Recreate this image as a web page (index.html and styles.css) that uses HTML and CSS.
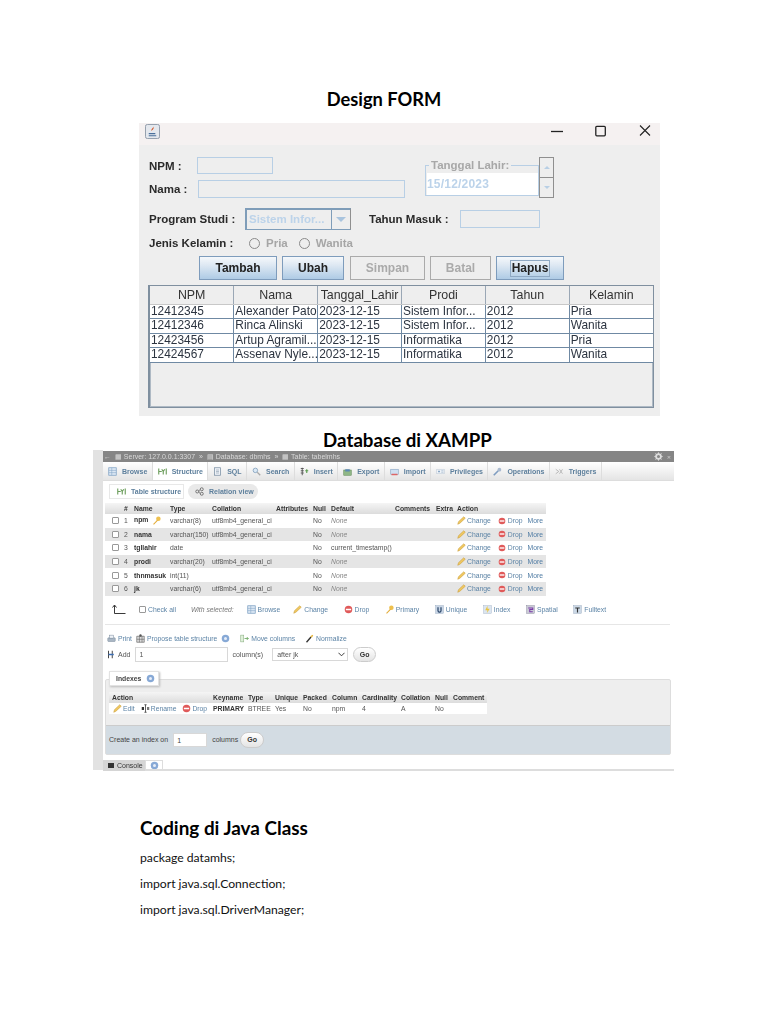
FILE: index.html
```html
<!DOCTYPE html>
<html lang="id">
<head>
<meta charset="utf-8">
<title>Design FORM</title>
<link rel="stylesheet" href="styles.css">
</head>
<body>
<svg class="defs" width="0" height="0" aria-hidden="true">
  <symbol id="pencil" viewBox="0 0 12 12"><path d="M1 11l1-3.5L9 1l2 2-7 6.5z" fill="#f0c860" stroke="#c79a35" stroke-width=".7"/></symbol>
  <symbol id="drop" viewBox="0 0 12 12"><circle cx="6" cy="6" r="5" fill="#e05a5a"/><rect x="2.5" y="5" width="7" height="2" fill="#fff"/></symbol>
  <symbol id="key" viewBox="0 0 12 12"><circle cx="8.5" cy="3.5" r="3" fill="#eec04e"/><path d="M7 5L1.5 10.5l1 1L8 6z" fill="#e3ad3a"/></symbol>
  <symbol id="grid" viewBox="0 0 12 12"><rect x="1" y="1" width="10" height="10" fill="#dce8f4" stroke="#7fa2c4"/><path d="M1 4.5h10M1 7.5h10M5 1v10" stroke="#7fa2c4" stroke-width=".7"/></symbol>
  <symbol id="struct" viewBox="0 0 12 12"><path d="M1 2v8M1 6h4M5 3l2 3 2-3M7 6v4M11 2v8" stroke="#6c9e5c" stroke-width="1.5" fill="none"/></symbol>
  <symbol id="sql" viewBox="0 0 12 12"><rect x="2" y="1" width="8" height="10" fill="#eef2f7" stroke="#7a8ea3"/><path d="M4 4h4M4 6h4M4 8h4" stroke="#7a8ea3" stroke-width=".7"/></symbol>
  <symbol id="search" viewBox="0 0 12 12"><circle cx="4.5" cy="4.5" r="3" fill="#dbe9f5" stroke="#7a9ab8"/><path d="M7 7l4 4" stroke="#a9a9a9" stroke-width="1.6"/></symbol>
  <symbol id="insert" viewBox="0 0 12 12"><path d="M1 2h4M1 5h4M1 8h4M3 1v10" stroke="#555" stroke-width="1.2"/><path d="M7 5h4M9 3v5" stroke="#5a9c4e" stroke-width="1.5"/></symbol>
  <symbol id="export" viewBox="0 0 12 12"><rect x="1" y="4" width="10" height="7" fill="#8fb786" stroke="#5b8750" stroke-width=".7"/><path d="M3 3h6v3H3z" fill="#5b87b5"/></symbol>
  <symbol id="import" viewBox="0 0 12 12"><rect x="1" y="3" width="10" height="7" fill="#cfe0f2" stroke="#7b9abb" stroke-width=".7"/><path d="M2 9h8v2H2z" fill="#d66"/></symbol>
  <symbol id="priv" viewBox="0 0 12 12"><rect x="1" y="3" width="10" height="6" fill="#eef2f7" stroke="#bcc8d4" stroke-width=".7"/><path d="M3 5h2v2H3z" fill="#6a8fb5"/><path d="M7 5h3M7 7h3" stroke="#8ba5bf" stroke-width=".7"/></symbol>
  <symbol id="wrench" viewBox="0 0 12 12"><path d="M1 11L7 5" stroke="#7e9cc0" stroke-width="2.2"/><circle cx="8.5" cy="3.5" r="2.5" fill="#a9bad0"/></symbol>
  <symbol id="trig" viewBox="0 0 12 12"><path d="M1 3l4 3-4 3M6 3l4 6M10 3L6 9" stroke="#aaa" fill="none"/></symbol>
  <symbol id="relation" viewBox="0 0 12 12"><circle cx="3" cy="6" r="2" fill="none" stroke="#555"/><circle cx="9" cy="3" r="2" fill="none" stroke="#555"/><circle cx="9" cy="9" r="2" fill="none" stroke="#555"/><path d="M5 6l2-3M5 6l2 3" stroke="#555" stroke-width=".7"/></symbol>
  <symbol id="help" viewBox="0 0 12 12"><circle cx="6" cy="6" r="5" fill="#87a9d6"/><circle cx="6" cy="6" r="2" fill="#e7eef8"/></symbol>
  <symbol id="print" viewBox="0 0 12 12"><rect x="1" y="5" width="10" height="5" rx="1" fill="#a9b6c4" stroke="#6d7f92" stroke-width=".6"/><rect x="3" y="1.5" width="6" height="4" fill="#eef2f7" stroke="#6d7f92" stroke-width=".6"/></symbol>
  <symbol id="propose" viewBox="0 0 12 12"><path d="M1 3h10v8H1z" fill="#ddd" stroke="#555" stroke-width=".8"/><path d="M1 7h10M4.5 3v8M8 3v8" stroke="#555" stroke-width=".7"/><circle cx="6" cy="2" r="1.6" fill="#555"/></symbol>
  <symbol id="move" viewBox="0 0 12 12"><rect x="1" y="1.5" width="4" height="9" fill="#dff0da" stroke="#86ad7e" stroke-width=".7"/><path d="M6 6h5M9 4l2 2-2 2" stroke="#5a9c4e" fill="none"/></symbol>
  <symbol id="normal" viewBox="0 0 12 12"><path d="M2 11L8 4" stroke="#333" stroke-width="1.8"/><path d="M7 3l2 2 2-3-1-1z" fill="#e8b83e"/></symbol>
  <symbol id="addcol" viewBox="0 0 12 12"><path d="M2 1v10M7 1v10" stroke="#333" stroke-width="1.2"/><path d="M2 6h7" stroke="#3d6fb5" stroke-width="2"/></symbol>
  <symbol id="rename" viewBox="0 0 12 12"><rect x="1" y="4" width="3" height="4" fill="#333"/><path d="M6 1v10M4.5 1h3M4.5 11h3" stroke="#333"/><rect x="8" y="4" width="3" height="4" fill="#777"/></symbol>
  <symbol id="unique" viewBox="0 0 12 12"><rect x="1" y="1" width="10" height="10" fill="#c9d6e6" stroke="#8fa4bd" stroke-width=".6"/><path d="M4 3v4.5a2 2 0 0 0 4 0V3" stroke="#1e3a5f" stroke-width="1.5" fill="none"/></symbol>
  <symbol id="index" viewBox="0 0 12 12"><rect x="1" y="1" width="10" height="10" fill="#dbe5f0" stroke="#9db0c6" stroke-width=".6"/><path d="M6 1L3 7h3l-1 4 4-6H6z" fill="#e9c33f"/></symbol>
  <symbol id="spatial" viewBox="0 0 12 12"><rect x="1" y="1" width="10" height="10" fill="#c9c9d6" stroke="#7f7f94" stroke-width=".6"/><path d="M3 4h6v2H5v3h4" stroke="#7a3aa8" stroke-width="1.4" fill="none"/></symbol>
  <symbol id="fulltext" viewBox="0 0 12 12"><rect x="1" y="1" width="10" height="10" fill="#cbd8e6" stroke="#90a4ba" stroke-width=".6"/><path d="M3 4h6M6 4v6" stroke="#333" stroke-width="1.5"/></symbol>
  <symbol id="gear" viewBox="0 0 12 12"><circle cx="6" cy="6" r="3.2" fill="none" stroke="#ddd" stroke-width="2.4"/><path d="M6 .5v2M6 9.500v2M.5 6h2M9.500 6h2M2 2l1.500 1.500M8.500 8.500L10 10M10 2L8.500 3.500M3.500 8.500L2 10" stroke="#ddd" stroke-width="1.3"/></symbol>
</svg>

<main class="page">
  <h2 class="doc-title">Design FORM</h2>

  <section class="win">
    <header class="win-bar">
      <span class="java-icon">
        <svg viewBox="0 0 16 16" width="15" height="15"><rect x=".5" y=".5" width="15" height="15" rx="2" fill="#e4e8ee" stroke="#8d99a8"/><path d="M8.500 2.500c1 2-2.500 3-1.500 5 .2-.8 3-2 2-4" fill="#d2562a"/><path d="M4 9.500h7v1.500H4zM4 12h8v1H4z" fill="#4a6f9c"/></svg>
      </span>
      <span class="win-ctrls">
        <svg viewBox="0 0 44 14" width="44" height="14" class="ctl"><path d="M0 7.500h12" stroke="#222" stroke-width="1.300"/></svg>
        <svg viewBox="0 0 44 14" width="44" height="14" class="ctl"><rect x=".8" y="2.300" width="9.500" height="9.500" rx="1" fill="none" stroke="#222" stroke-width="1.300"/></svg>
        <svg viewBox="0 0 12 14" width="12" height="14" class="ctl"><path d="M1 1.500l10 10M11 1.500l-10 10" stroke="#222" stroke-width="1.100"/></svg>
      </span>
    </header>
    <div class="win-body">
      <div class="top-block">
        <div class="id-col">
          <div class="row-npm"><label class="lbl lbl-npm">NPM :</label><span class="field field-npm"></span></div>
          <div class="row-nama"><label class="lbl lbl-nama">Nama :</label><span class="field field-nama"></span></div>
        </div>
        <div class="date-box">
          <div class="date-group">
            <span class="date-legend">Tanggal Lahir:</span>
            <span class="date-value">15/12/2023</span>
          </div>
          <div class="spinner">
            <span class="spin"><i class="tri tri-up"></i></span>
            <span class="spin"><i class="tri tri-down"></i></span>
          </div>
        </div>
      </div>
      <div class="row-prodi">
        <label class="lbl lbl-prodi">Program Studi :</label>
        <span class="combo"><span class="combo-text">Sistem Infor...</span><span class="combo-btn"><i class="tri tri-combo"></i></span></span>
        <label class="lbl lbl-tahun">Tahun Masuk :</label>
        <span class="field field-tahun"></span>
      </div>
      <div class="row-jk">
        <label class="lbl lbl-jk">Jenis Kelamin :</label>
        <span class="radio"></span><span class="radio-text">Pria</span>
        <span class="radio radio-2"></span><span class="radio-text">Wanita</span>
      </div>
      <div class="btn-row">
        <button class="jbtn on w-tambah">Tambah</button>
        <button class="jbtn on w-ubah">Ubah</button>
        <button class="jbtn off w-simpan">Simpan</button>
        <button class="jbtn off w-batal">Batal</button>
        <button class="jbtn on w-hapus"><span class="focus">Hapus</span></button>
      </div>
      <div class="jtable-wrap">
        <table class="jtable">
          <thead><tr><th>NPM</th><th>Nama</th><th>Tanggal_Lahir</th><th>Prodi</th><th>Tahun</th><th>Kelamin</th></tr></thead>
          <tbody>
            <tr><td>12412345</td><td>Alexander Pato</td><td>2023-12-15</td><td>Sistem Infor...</td><td>2012</td><td>Pria</td></tr>
            <tr><td>12412346</td><td>Rinca Alinski</td><td>2023-12-15</td><td>Sistem Infor...</td><td>2012</td><td>Wanita</td></tr>
            <tr><td>12423456</td><td>Artup Agramil...</td><td>2023-12-15</td><td>Informatika</td><td>2012</td><td>Pria</td></tr>
            <tr><td>12424567</td><td>Assenav Nyle...</td><td>2023-12-15</td><td>Informatika</td><td>2012</td><td>Wanita</td></tr>
          </tbody>
        </table>
      </div>
    </div>
  </section>

  <h2 class="doc-title title-2">Database di XAMPP</h2>

  <section class="pma">
    <div class="crumb">
      <span class="crumb-text">← &nbsp;▦ Server: 127.0.0.1:3307 &nbsp;» &nbsp;▤ Database: dbmhs &nbsp;» &nbsp;▦ Table: tabelmhs</span>
      <span class="crumb-end"><svg class="ic"><use href="#gear"/></svg><span class="crumb-x">⌅</span></span>
    </div>
    <nav class="tabs">
      <a class="tab"><svg class="ic"><use href="#grid"/></svg>Browse</a>
      <a class="tab active"><svg class="ic"><use href="#struct"/></svg>Structure</a>
      <a class="tab"><svg class="ic"><use href="#sql"/></svg>SQL</a>
      <a class="tab"><svg class="ic"><use href="#search"/></svg>Search</a>
      <a class="tab"><svg class="ic"><use href="#insert"/></svg>Insert</a>
      <a class="tab"><svg class="ic"><use href="#export"/></svg>Export</a>
      <a class="tab"><svg class="ic"><use href="#import"/></svg>Import</a>
      <a class="tab"><svg class="ic"><use href="#priv"/></svg>Privileges</a>
      <a class="tab"><svg class="ic"><use href="#wrench"/></svg>Operations</a>
      <a class="tab"><svg class="ic"><use href="#trig"/></svg>Triggers</a>
    </nav>
    <div class="subtabs">
      <a class="sub sub-a"><svg class="ic"><use href="#struct"/></svg>Table structure</a>
      <a class="sub sub-b"><svg class="ic"><use href="#relation"/></svg>Relation view</a>
    </div>
    <table class="stbl">
      <thead><tr><th></th><th>#</th><th>Name</th><th>Type</th><th>Collation</th><th>Attributes</th><th>Null</th><th>Default</th><th>Comments</th><th>Extra</th><th>Action</th></tr></thead>
      <tbody>
        <tr><td><i class="cb"></i></td><td>1</td><td class="nm">npm <svg class="ic key-ic"><use href="#key"/></svg></td><td>varchar(8)</td><td>utf8mb4_general_ci</td><td></td><td>No</td><td class="it">None</td><td></td><td></td><td><span class="acts"><svg class="ic"><use href="#pencil"/></svg><a class="chg">Change</a><svg class="ic ic-d"><use href="#drop"/></svg><a class="drp">Drop</a><a class="more">More</a></span></td></tr>
        <tr><td><i class="cb"></i></td><td>2</td><td class="nm">nama</td><td>varchar(150)</td><td>utf8mb4_general_ci</td><td></td><td>No</td><td class="it">None</td><td></td><td></td><td><span class="acts"><svg class="ic"><use href="#pencil"/></svg><a class="chg">Change</a><svg class="ic ic-d"><use href="#drop"/></svg><a class="drp">Drop</a><a class="more">More</a></span></td></tr>
        <tr><td><i class="cb"></i></td><td>3</td><td class="nm">tgllahir</td><td>date</td><td></td><td></td><td>No</td><td>current_timestamp()</td><td></td><td></td><td><span class="acts"><svg class="ic"><use href="#pencil"/></svg><a class="chg">Change</a><svg class="ic ic-d"><use href="#drop"/></svg><a class="drp">Drop</a><a class="more">More</a></span></td></tr>
        <tr><td><i class="cb"></i></td><td>4</td><td class="nm">prodi</td><td>varchar(20)</td><td>utf8mb4_general_ci</td><td></td><td>No</td><td class="it">None</td><td></td><td></td><td><span class="acts"><svg class="ic"><use href="#pencil"/></svg><a class="chg">Change</a><svg class="ic ic-d"><use href="#drop"/></svg><a class="drp">Drop</a><a class="more">More</a></span></td></tr>
        <tr><td><i class="cb"></i></td><td>5</td><td class="nm">thnmasuk</td><td>int(11)</td><td></td><td></td><td>No</td><td class="it">None</td><td></td><td></td><td><span class="acts"><svg class="ic"><use href="#pencil"/></svg><a class="chg">Change</a><svg class="ic ic-d"><use href="#drop"/></svg><a class="drp">Drop</a><a class="more">More</a></span></td></tr>
        <tr><td><i class="cb"></i></td><td>6</td><td class="nm">jk</td><td>varchar(6)</td><td>utf8mb4_general_ci</td><td></td><td>No</td><td class="it">None</td><td></td><td></td><td><span class="acts"><svg class="ic"><use href="#pencil"/></svg><a class="chg">Change</a><svg class="ic ic-d"><use href="#drop"/></svg><a class="drp">Drop</a><a class="more">More</a></span></td></tr>
      </tbody>
    </table>
    <div class="bulk">
      <svg class="arrow" viewBox="0 0 14 10" width="14" height="10"><path d="M2.500 9.500V1.500M.5 3.500l2-2.500 2 2.500M2.500 9.500h11" fill="none" stroke="#222" stroke-width=".9"/></svg>
      <i class="cb cb-all"></i><a class="lnk check-all">Check all</a>
      <em class="with">With selected:</em>
      <a class="lnk b-item b-first"><svg class="ic"><use href="#grid"/></svg>Browse</a>
      <a class="lnk b-item b-first"><svg class="ic"><use href="#pencil"/></svg>Change</a>
      <a class="lnk b-item"><svg class="ic"><use href="#drop"/></svg>Drop</a>
      <a class="lnk b-item"><svg class="ic"><use href="#key"/></svg>Primary</a>
      <a class="lnk b-item"><svg class="ic"><use href="#unique"/></svg>Unique</a>
      <a class="lnk b-item"><svg class="ic"><use href="#index"/></svg>Index</a>
      <a class="lnk b-item"><svg class="ic"><use href="#spatial"/></svg>Spatial</a>
      <a class="lnk b-item"><svg class="ic"><use href="#fulltext"/></svg>Fulltext</a>
    </div>
    <hr class="rule">
    <div class="tools">
      <a class="lnk t-item"><svg class="ic"><use href="#print"/></svg>Print</a>
      <a class="lnk t-item t-prop"><svg class="ic"><use href="#propose"/></svg>Propose table structure</a>
      <svg class="ic ic-help"><use href="#help"/></svg>
      <a class="lnk t-item t-move"><svg class="ic"><use href="#move"/></svg>Move columns</a>
      <a class="lnk t-item t-norm"><svg class="ic"><use href="#normal"/></svg>Normalize</a>
    </div>
    <div class="addrow">
      <svg class="ic"><use href="#addcol"/></svg>
      <span class="add-l">Add</span>
      <span class="inp inp-add">1</span>
      <span class="add-c">column(s)</span>
      <span class="sel">after jk<svg class="sel-caret" viewBox="0 0 8 5" width="7" height="5"><path d="M.5.5L4 4 7.500.5" fill="none" stroke="#222"/></svg></span>
      <span class="go go-add">Go</span>
    </div>
    <section class="idx">
      <div class="idx-legend">Indexes<svg class="ic"><use href="#help"/></svg></div>
      <table class="itbl">
        <thead><tr><th>Action</th><th>Keyname</th><th>Type</th><th>Unique</th><th>Packed</th><th>Column</th><th>Cardinality</th><th>Collation</th><th>Null</th><th>Comment</th></tr></thead>
        <tbody><tr>
          <td><span class="acts act-idx"><svg class="ic"><use href="#pencil"/></svg><a class="chg">Edit</a><svg class="ic ic-r"><use href="#rename"/></svg><a class="chg">Rename</a><svg class="ic ic-r"><use href="#drop"/></svg><a class="chg">Drop</a></span></td>
          <td class="nm">PRIMARY</td><td>BTREE</td><td>Yes</td><td>No</td><td>npm</td><td>4</td><td>A</td><td>No</td><td></td>
        </tr></tbody>
      </table>
      <div class="idx-foot">
        <span>Create an index on</span>
        <span class="inp inp-idx">1</span>
        <span>columns</span>
        <span class="go go-idx">Go</span>
      </div>
    </section>
    <div class="console">
      <span class="console-tab"><i class="console-mark"></i>Console</span>
      <span class="console-help"><svg class="ic"><use href="#help"/></svg></span>
    </div>
  </section>

  <h2 class="doc-title title-3">Coding di Java Class</h2>
  <p class="code">package datamhs;</p>
  <p class="code">import java.sql.Connection;</p>
  <p class="code">import java.sql.DriverManager;</p>
</main>
</body>
</html>
```
FILE: styles.css
```css
* { box-sizing: border-box; }
html, body { margin: 0; padding: 0; background: #fff; }
.defs { position: absolute; }
.page { width: 768px; height: 1024px; overflow: hidden; padding-top: 89px; font-family: "Liberation Sans", Arial, sans-serif; }

.doc-title { margin: 0; height: 20px; font: 700 18.3px/20px Lato, sans-serif; color: #000; text-align: center; }
.title-2 { margin-top: 14px; padding-left: 47px; font-size: 18.7px; }
.title-3 { margin: 48px 0 0 140px; text-align: left; font-size: 18.9px; }
.code { margin: 10px 0 0 140px; font: 400 12.2px/16px Lato, sans-serif; color: #111; }
.title-3 + .code { margin-top: 12px; }

/* java window */
.win { width: 521px; height: 293px; margin: 14px 0 0 139px; background: #eee; filter: blur(.35px); }
.win-bar { height: 22px; background: #f5f1f1; display: flex; align-items: flex-start; justify-content: space-between; padding: 1px 9px 0 6px; }
.java-icon { display: flex; }
.win-ctrls { display: flex; }
.win-body { padding: 12px 0 0 10px; }
.lbl { font-size: 11.5px; font-weight: 700; color: #2a2a2a; white-space: nowrap; }
.field { display: block; background: #eee; border: 1px solid #b8cfe5; }
.top-block { display: flex; height: 40px; }
.id-col { width: 266px; }
.row-npm, .row-nama { display: flex; align-items: center; }
.lbl-npm { width: 48px; }
.lbl-nama { width: 49px; }
.field-npm { width: 76px; height: 17px; }
.row-nama { margin-top: 6px; }
.field-nama { width: 207px; height: 18px; }
.date-box { display: flex; margin-left: 10px; }
.date-group { position: relative; width: 114px; height: 31px; margin-top: 8px; border: 1px solid #b8cfe5; background: #eee; }
.date-legend { position: absolute; left: 3px; top: -7px; padding: 0 2px; font-size: 11.5px; font-weight: 700; color: #a8a8a8; background: #eee; line-height: 13px; white-space: nowrap; }
.date-value { position: absolute; left: 1px; right: 0; top: 7px; bottom: 0; background: #fff; font-size: 12px; font-weight: 700; color: #bcd3ea; line-height: 22px; letter-spacing: .2px; }
.spinner { display: flex; flex-direction: column; width: 15px; height: 41px; }
.spin { display: flex; align-items: center; justify-content: center; flex: 1; border: 1px solid #8f8f8f; background: #eee; }
.spin + .spin { border-top-width: 0; }
.tri { display: block; width: 0; height: 0; border-left: 3.500px solid transparent; border-right: 3.500px solid transparent; }
.tri-up { border-bottom: 3px solid #b8cfe5; }
.tri-down { border-top: 3px solid #b8cfe5; }
.tri-combo { border-left-width: 5px; border-right-width: 5px; border-top: 5px solid #a9c4de; }

.row-prodi { display: flex; align-items: center; height: 22px; margin-top: 11px; }
.lbl-prodi { width: 96px; }
.combo { display: flex; width: 106px; height: 22px; border: 1px solid #7f9db9; border-right-color: #8f8f8f; background: #eee; border-left-width: 2px; border-top-width: 2px; }
.combo-text { flex: 1; font-size: 11.5px; font-weight: 700; color: #bcd3ea; line-height: 18px; padding-left: 2px; white-space: nowrap; overflow: hidden; }
.combo-btn { width: 19px; display: flex; align-items: center; justify-content: center; border-left: 1px solid #7f9db9; }
.lbl-tahun { margin-left: 18px; width: 91px; }
.field-tahun { width: 80px; height: 18px; }
.row-jk { display: flex; align-items: center; height: 14px; margin-top: 6px; }
.lbl-jk { width: 100px; }
.radio { width: 11px; height: 11px; border: 1px solid #8a8a8a; border-radius: 50%; background: #eee; }
.radio-text { margin-left: 6px; font-size: 11.5px; font-weight: 700; color: #a6a6a6; white-space: nowrap; }
.radio-2 { margin-left: 11px; }
.btn-row { display: flex; gap: 5px; margin: 6px 0 0 50px; }
.jbtn { height: 24px; padding: 0; font: 700 12px "Liberation Sans", sans-serif; }
.jbtn.on { color: #222; border: 1px solid #7e9cbc; background: linear-gradient(#f5f8fb, #dfe9f3 35%, #aecbe5); }
.jbtn.off { color: #aaa; border: 1px solid #aaa; background: #eee; }
.w-tambah { width: 78px; }
.w-ubah { width: 62px; }
.w-simpan { width: 75px; margin-left: 1px; }
.w-batal { width: 61px; }
.w-hapus { width: 68px; }
.focus { display: inline-block; padding: 0 1px; border: 1px solid #8fa9c4; line-height: 15px; }
.jtable-wrap { width: 506px; height: 123px; margin: 5px 0 0 -1px; border: 2px solid #7f8f9f; border-width: 1px 1px 1px 2px; background: #eee; box-shadow: inset 0 0 0 1px #aeb9c4; }
.jtable { width: 100%; table-layout: fixed; border-collapse: collapse; font-size: 11.9px; color: #2c3440; }
.jtable th { height: 18px; padding: 0; font-size: 12.4px; font-weight: 400; background: #eee; border-right: 1px solid #9aa7b5; border-bottom: 1px solid #c8c8c8; color: #333; white-space: nowrap; overflow: hidden; }
.jtable td { height: 14.500px; padding: 0 0 0 1px; background: #fff; border: 1px solid #6f89a3; border-width: 0 1px 1px 0; line-height: 13px; white-space: nowrap; overflow: hidden; }
.jtable th:last-child, .jtable td:last-child { border-right: 0; }

/* phpMyAdmin */
.pma { width: 581px; height: 320px; margin-left: 93px; padding-top: 1px; border-left: 10px solid #e2e2e2; font-size: 6.800px; color: #555; filter: blur(.4px); }
.ic { width: 9px; height: 9px; flex: none; }
.crumb { display: flex; justify-content: space-between; align-items: center; height: 11px; background: #858585; color: #d9d9d9; padding: 0 2px 0 1px; font-size: 7px; white-space: nowrap; }
.crumb-end { display: flex; gap: 3px; align-items: center; }
.crumb-x { color: #ccc; }
.tabs { display: flex; height: 19px; background: linear-gradient(#fff, #e4e4e4); border-bottom: 1px solid #ddd; }
.tab { display: flex; align-items: center; gap: 5px; padding: 0 4.400px 0 5px; border-right: 1px solid #ddd; font-weight: 700; font-size: 7px; color: #5d7f9c; white-space: nowrap; }
.tab.active { background: #fff; }
.subtabs { display: flex; gap: 4px; height: 15px; margin: 3px 0 0 6px; }
.sub { display: flex; align-items: center; gap: 5px; font-weight: 700; font-size: 7px; color: #5d7f9c; white-space: nowrap; }
.sub-a { width: 75px; padding-left: 7px; background: #fff; border: 1px solid #e8e8e8; }
.sub-b { width: 70px; padding-left: 7px; background: #e9e9e9; border-radius: 8px; }
.stbl { width: 441px; margin: 4px 0 0 2px; table-layout: fixed; border-collapse: collapse; }
.stbl th { height: 11px; padding: 0 0 0 2px; text-align: left; font-size: 6.800px; color: #333; background: linear-gradient(#f5f5f5, #dcdcdc); white-space: nowrap; overflow: hidden; }
.stbl td { height: 13.600px; padding: 0 0 0 2px; white-space: nowrap; overflow: hidden; }
.stbl tbody tr:nth-child(even) { background: #e5e5e5; }
.stbl th:nth-child(1) { width: 17px; }
.stbl th:nth-child(2) { width: 10px; }
.stbl th:nth-child(3) { width: 36px; }
.stbl th:nth-child(4) { width: 42px; }
.stbl th:nth-child(5) { width: 64px; }
.stbl th:nth-child(6) { width: 37px; }
.stbl th:nth-child(7) { width: 18px; }
.stbl th:nth-child(8) { width: 64px; }
.stbl th:nth-child(9) { width: 41px; }
.stbl th:nth-child(10) { width: 21px; }
.nm { font-weight: 700; color: #333; }
.it { font-style: italic; color: #888; }
.cb { display: block; width: 7px; height: 7px; margin-left: 5px; border: 1px solid #999; border-radius: 1px; background: #fff; }
.key-ic { vertical-align: middle; margin-left: 2px; }
.acts { display: flex; align-items: center; }
.chg { margin-left: 1px; color: #5d84a6; }
.ic-d { margin-left: 7px; width: 8px; height: 8px; }
.drp { margin-left: 2px; color: #5d84a6; }
.more { margin-left: 5px; color: #4f7ba3; }
.bulk { display: flex; align-items: center; height: 13px; margin: 7px 0 0 9px; }
.arrow { flex: none; }
.cb-all { margin-left: 13px; }
.lnk { display: flex; align-items: center; color: #5d84a6; white-space: nowrap; }
.check-all { margin-left: 2px; }
.with { margin: 0 0 0 15px; color: #777; }
.b-item { gap: 2px; margin-left: 15.500px; }
.b-first { margin-left: 13px; }
.rule { height: 1px; margin: 8px 0 0 2px; width: 565px; border: 0; background: #e6e6e6; }
.tools { display: flex; align-items: center; height: 12px; margin: 8px 0 0 4px; }
.t-item { gap: 2px; }
.t-prop { margin-left: 4px; }
.ic-help { margin-left: 4px; }
.t-move { margin-left: 10px; }
.t-norm { margin-left: 10px; }
.addrow { display: flex; align-items: center; height: 15px; margin: 2px 0 0 4px; font-size: 7px; }
.add-l { margin-left: 2px; }
.inp { display: block; background: #fff; border: 1px solid #d8d8d8; line-height: 13px; padding-left: 3px; }
.inp-add { width: 93px; height: 15px; margin-left: 5px; }
.add-c { margin-left: 4px; }
.sel { display: flex; align-items: center; justify-content: space-between; width: 76px; height: 13px; margin-left: 9px; padding: 0 2px 0 4px; background: #fff; border: 1px solid #d8d8d8; }
.go { display: flex; align-items: center; justify-content: center; border-radius: 8px; border: 1px solid #ccc; background: linear-gradient(#fff, #e4e4e4); color: #333; font-weight: 700; }
.go-add { width: 23px; height: 15px; margin-left: 5px; }
.idx { position: relative; width: 566px; height: 76px; margin: 17px 0 0 2px; padding: 12px 0 0 3px; background: #eee; border: 1px solid #ddd; border-radius: 2px; }
.idx-legend { position: absolute; left: 3px; top: -9px; display: flex; align-items: center; gap: 5px; width: 50px; height: 15px; padding-left: 6px; background: #fff; border: 1px solid #e2e2e2; box-shadow: 1px 1px 2px #bbb; font-weight: 700; color: #444; }
.itbl { width: 378px; table-layout: fixed; border-collapse: collapse; }
.itbl th { height: 11px; padding: 0 0 0 1px; text-align: left; font-size: 6.800px; color: #333; background: linear-gradient(#f5f5f5, #dcdcdc); white-space: nowrap; overflow: hidden; }
.itbl td { height: 11px; padding: 0 0 0 1px; background: #fff; white-space: nowrap; overflow: hidden; }
.itbl th:nth-child(1) { width: 103px; padding-left: 3px; }
.itbl th:nth-child(2) { width: 35px; }
.itbl th:nth-child(3) { width: 27px; }
.itbl th:nth-child(4) { width: 28px; }
.itbl th:nth-child(5) { width: 29px; }
.itbl th:nth-child(6) { width: 30px; }
.itbl th:nth-child(7) { width: 39px; }
.itbl th:nth-child(8) { width: 34px; }
.itbl th:nth-child(9) { width: 18px; }
.act-idx { padding-left: 3px; }
.ic-r { margin-left: 6px; }
.idx-foot { position: absolute; left: 0; right: 0; bottom: 0; height: 29px; display: flex; align-items: center; padding-left: 3px; background: #d3dce3; border-top: 1px solid #ccc; color: #444; font-size: 7px; }
.inp-idx { width: 34px; height: 14px; margin: 0 5px; }
.go-idx { width: 24px; height: 16px; margin-left: 2px; }
.console { display: flex; height: 11px; margin-top: 5px; border-bottom: 2px solid #ddd; }
.console-tab { display: flex; align-items: center; gap: 3px; width: 42px; height: 11px; padding-left: 5px; background: #d5d5d5; color: #333; font-size: 7px; }
.console-mark { width: 6px; height: 5px; background: #333; }
.console-help { display: flex; justify-content: center; width: 18px; height: 9px; background: #fff; border: 1px solid #ddd; border-bottom: 0; overflow: hidden; }
```
